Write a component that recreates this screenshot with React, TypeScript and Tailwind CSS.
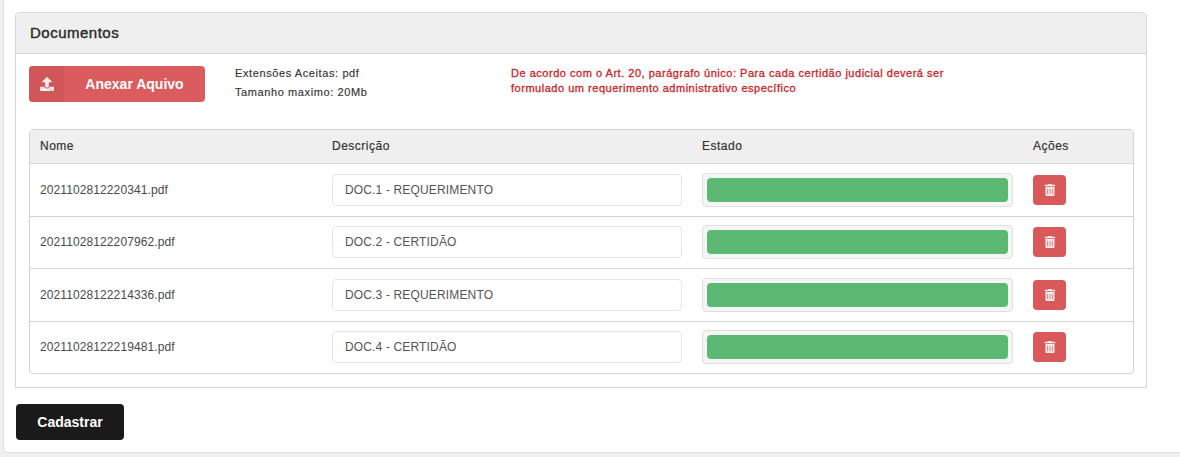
import { FaTrashAlt, FaUpload } from "react-icons/fa";

const docs = [
  { file: "2021102812220341.pdf", desc: "DOC.1 - REQUERIMENTO", h: "h-[53px]" },
  { file: "20211028122207962.pdf", desc: "DOC.2 - CERTIDÃO", h: "h-[52px] pb-px" },
  { file: "20211028122214336.pdf", desc: "DOC.3 - REQUERIMENTO", h: "h-[53px]" },
  { file: "20211028122219481.pdf", desc: "DOC.4 - CERTIDÃO", h: "h-[52px] pb-px" },
];

const cols = "grid grid-cols-[292px_370px_331px_1fr] items-center";

function DocRow({ file, desc, h }: { file: string; desc: string; h: string }) {
  return (
    <div className={`${cols} ${h} border-t border-[#d4d4d4] pl-[10px] text-[#4a4a4a]`}>
      <div className="text-[12px] tracking-[0.1px]">{file}</div>
      <div className="pr-5">
        <div className="flex h-8 items-center rounded border border-[#e6e6e6] bg-white px-3 text-[12px] tracking-[0.15px] text-[#555]">
          {desc}
        </div>
      </div>
      <div className="pr-5">
        <div className="h-[34px] w-[311px] rounded border border-[#e0e0e0] bg-[#f5f5f5] p-1">
          <div className="h-full rounded bg-[#5cb974]" />
        </div>
      </div>
      <button className="flex h-[30px] w-[33px] items-center justify-center rounded bg-[#d9595b] text-[#fbeeee]">
        <FaTrashAlt className="size-3" />
      </button>
    </div>
  );
}

export default function App() {
  return (
    <div className="h-[457px] w-[1180px] overflow-hidden bg-[#eef0f3] font-['Liberation_Sans',Arial,sans-serif]">
      <div className="ml-[3px] h-[453px] rounded-bl border-b border-l border-[#dcdfe3] bg-white pl-[11px] pt-3">
        <div className="w-[1132px] rounded-t border border-[#d8d8d8]">
          <div className="flex h-[41px] items-center border-b border-[#d8d8d8] bg-[#efefef] px-[14px] pt-px text-[15px] tracking-[0.5px] text-[#2b2b2b] [-webkit-text-stroke:0.4px]">
            Documentos
          </div>
          <div className="pb-[13px] pl-[13px] pr-3 pt-3">
            <div className="flex h-[63px] items-start">
              <button className="flex h-9 w-[176px] items-center overflow-hidden rounded bg-[#da5c5e] text-[14px] font-bold text-white">
                <span className="flex h-full w-[35px] items-center justify-center bg-[#d05659]">
                  <FaUpload className="size-[14px] text-[#fdeeee]" />
                </span>
                <span className="flex-1 text-center">Anexar Aquivo</span>
              </button>
              <div className="ml-[30px] mt-[-2px] w-[276px] text-[11px] leading-[19px] tracking-[0.6px] text-[#333] [-webkit-text-stroke:0.15px]">
                <div>Extensões Aceitas: pdf</div>
                <div>Tamanho maximo: 20Mb</div>
              </div>
              <div className="w-[450px] text-[11px] leading-[15px] tracking-[0.52px] text-[#cc1f28] [-webkit-text-stroke:0.3px]">
                De acordo com o Art. 20, parágrafo único: Para cada certidão judicial deverá ser formulado um requerimento administrativo específico
              </div>
            </div>
            <div className="rounded border border-[#d4d4d4]">
              <div className={`${cols} h-[33px] bg-[#efefef] pb-[2px] pl-[10px] text-[12px] tracking-[0.5px] text-[#333] [-webkit-text-stroke:0.2px]`}>
                <div>Nome</div>
                <div>Descrição</div>
                <div>Estado</div>
                <div>Ações</div>
              </div>
              {docs.map((d) => (
                <DocRow key={d.file} {...d} />
              ))}
            </div>
          </div>
        </div>
        <button className="ml-px mt-4 h-9 w-[108px] rounded bg-[#1a1a1a] text-[14px] font-bold text-white">Cadastrar</button>
      </div>
    </div>
  );
}
